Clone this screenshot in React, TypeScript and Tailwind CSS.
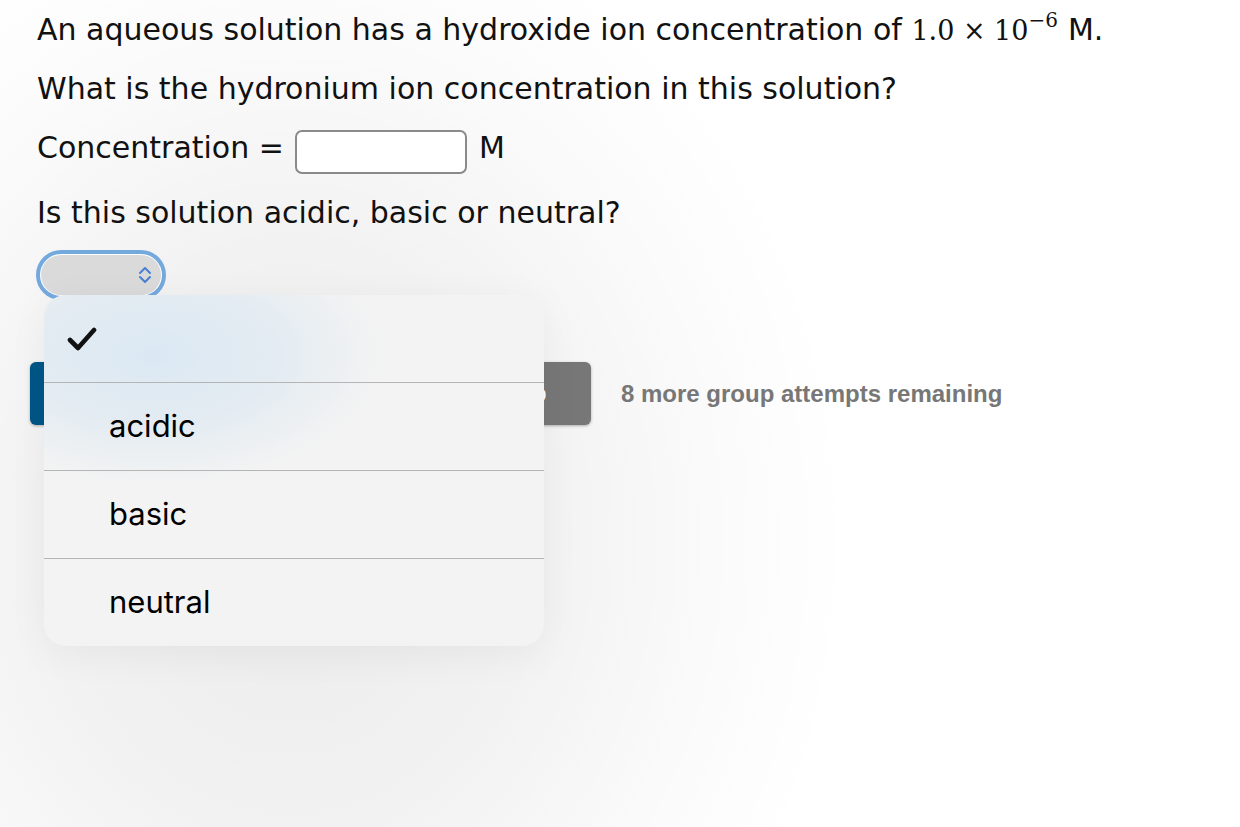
import { useState } from 'react';

const options = ['acidic', 'basic', 'neutral'];

function CheckMark() {
  return (
    <svg width="30" height="26" viewBox="0 0 30 26" fill="none">
      <polyline points="3,14 11,22 27,4" stroke="#111" strokeWidth="4.6" strokeLinecap="round" strokeLinejoin="round" />
    </svg>
  );
}

function UpDown() {
  return (
    <svg width="16" height="18" viewBox="0 0 16 18" fill="none">
      <path d="M3 7 L8 2 L13 7" stroke="#4a7fd1" strokeWidth="2" strokeLinecap="round" strokeLinejoin="round" />
      <path d="M3 11 L8 16 L13 11" stroke="#4a7fd1" strokeWidth="2" strokeLinecap="round" strokeLinejoin="round" />
    </svg>
  );
}

export default function App() {
  const [value, setValue] = useState('');
  const [open, setOpen] = useState(true);

  return (
    <div className="relative min-h-[827px] w-full overflow-hidden bg-white font-['DejaVu_Sans',Verdana,sans-serif] text-[30px] text-[#111]">
      {/* dimmed halo behind the open menu */}
      {open && (
        <div className="pointer-events-none absolute inset-0 bg-[radial-gradient(ellipse_560px_660px_at_290px_540px,rgba(0,0,0,0.08),rgba(0,0,0,0.05)_45%,rgba(0,0,0,0.02)_75%,transparent_100%)]" />
      )}

      <div className="relative pl-[37px] pt-[1px]">
        <p className="leading-[58px] whitespace-nowrap">
          An aqueous solution has a hydroxide ion concentration of{' '}
          <span className="font-['DejaVu_Serif',serif] text-[27px]">
            1.0 × 10<sup className="relative -top-[3px] text-[20px] align-super">−6</sup>
          </span>
          <span className="ml-[10px]">M.</span>
        </p>
        <p className="leading-[58px]">What is the hydronium ion concentration in this solution?</p>

        <div className="flex h-[58px] items-center">
          <span>Concentration =</span>
          <input
            type="text"
            className="ml-[11px] mt-[10px] h-[44px] w-[172px] rounded-[7px] border-2 border-[#8a8a8a] bg-white px-2 outline-none"
          />
          <span className="ml-[12px]">M</span>
        </div>

        <p className="mt-[8px] leading-[58px]">Is this solution acidic, basic or neutral?</p>

        <button
          onClick={() => setOpen(!open)}
          className="mt-[8px] -ml-[1px] flex h-[50px] w-[130px] items-center rounded-full border-[4px] border-[#74a9de] bg-white p-[1px]"
        >
          <span className="flex h-full w-full items-center justify-end rounded-full bg-[#dadada] pr-[8px]">
            <UpDown />
          </span>
        </button>

        <div className="mt-[62px] -ml-[7px] flex items-center font-['Liberation_Sans',Arial,sans-serif]">
          <button className="h-[63px] w-[262px] rounded-[6px] bg-[#005687] text-[22px] font-bold text-white shadow-[0_1px_3px_rgba(0,0,0,0.3)]">
            Submit Answer
          </button>
          <button className="ml-[13px] h-[63px] w-[286px] rounded-[6px] bg-[#777777] text-[22px] font-bold text-white shadow-[0_1px_3px_rgba(0,0,0,0.3)]">
            Retry Entire Group
          </button>
          <span className="ml-[30px] text-[24px] font-bold text-[#777]">8 more group attempts remaining</span>
        </div>
      </div>

      {open && (
        <div className="absolute left-[44px] top-[295px] w-[500px] overflow-hidden rounded-[22px] bg-[#f3f3f3] font-['Inter','Noto_Sans',sans-serif] text-[31px] text-black shadow-[0_8px_40px_rgba(0,0,0,0.05)]">
          <div className="bg-[radial-gradient(ellipse_230px_130px_at_110px_60px,#dbe8f3,#e4ecf2_55%,transparent)]">
            <div
              className="flex h-[87px] items-center pl-[23px]"
              onClick={() => { setValue(''); setOpen(false); }}
            >
              {value === '' && <CheckMark />}
            </div>
            {options.map((o) => (
              <div
                key={o}
                onClick={() => { setValue(o); setOpen(false); }}
                className="flex h-[88px] items-center border-t border-[#b5b5b5] pl-[65px]"
              >
                {o}
              </div>
            ))}
          </div>
        </div>
      )}
    </div>
  );
}
